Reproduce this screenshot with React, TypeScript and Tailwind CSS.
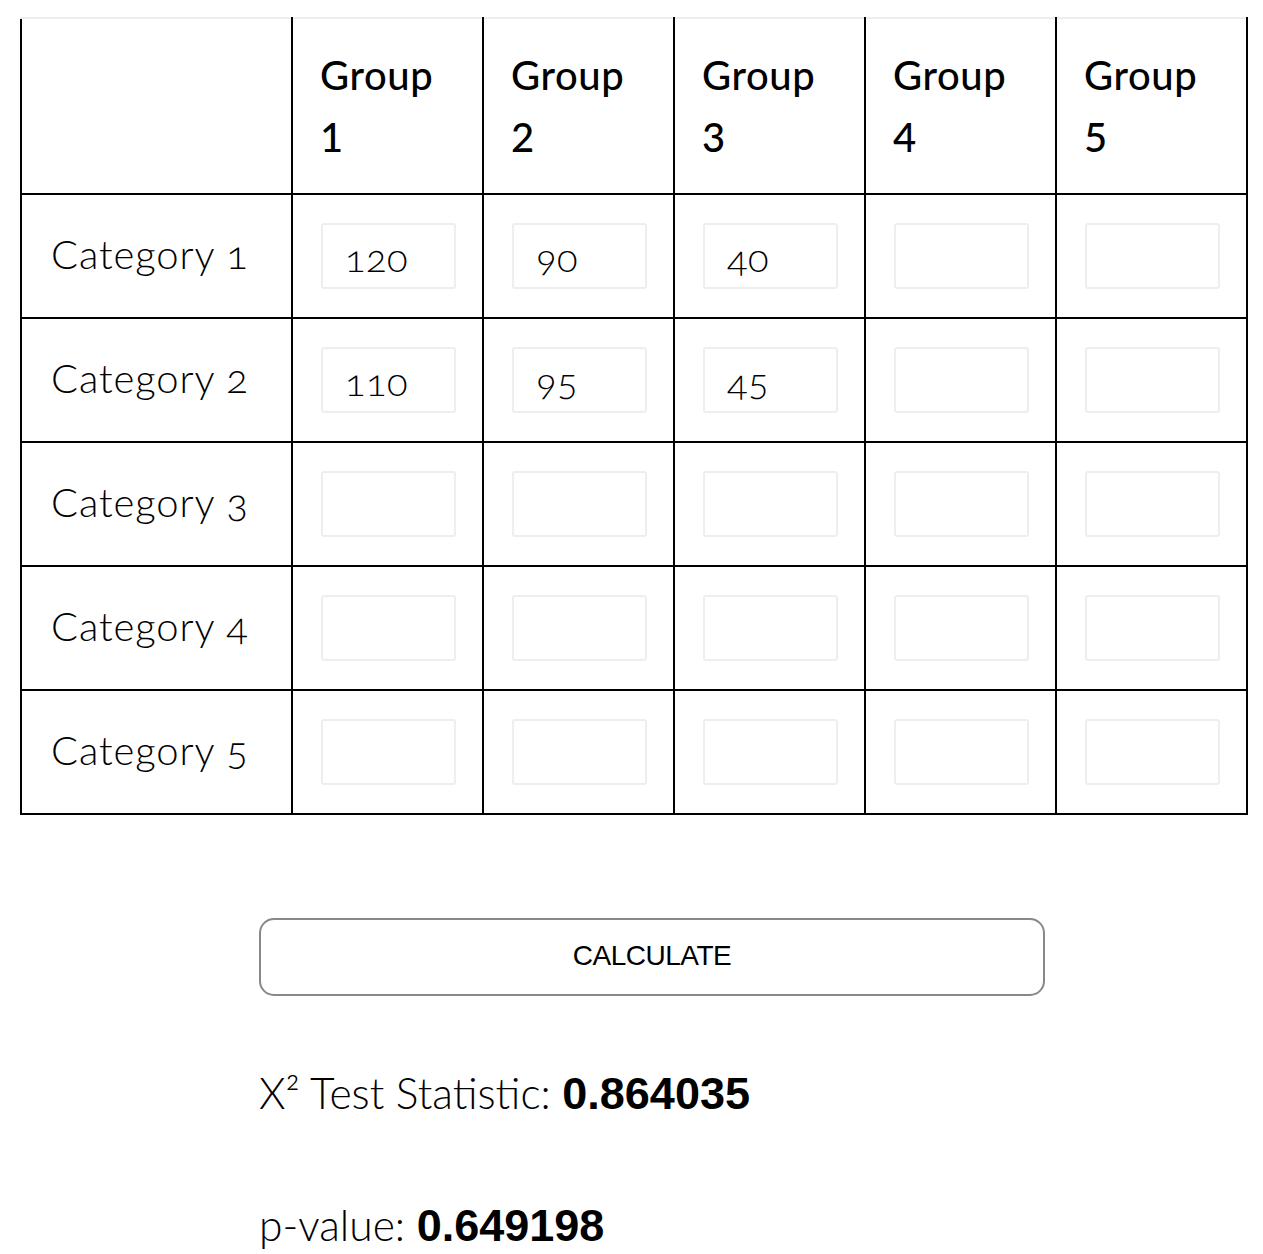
import { useState } from "react";

const groups = ["Group 1", "Group 2", "Group 3", "Group 4", "Group 5"];
const categories = ["Category 1", "Category 2", "Category 3", "Category 4", "Category 5"];

const initial: string[][] = [
  ["120", "90", "40", "", ""],
  ["110", "95", "45", "", ""],
  ["", "", "", "", ""],
  ["", "", "", "", ""],
  ["", "", "", "", ""],
];

export default function App() {
  const [cells, setCells] = useState(initial);

  function update(r: number, c: number, v: string) {
    setCells((prev) => prev.map((row, i) => (i === r ? row.map((x, j) => (j === c ? v : x)) : row)));
  }

  return (
    <div className="min-h-[1254px] bg-white text-black font-['Lato','Open_Sans',sans-serif] pt-[17px]">
      <table className="ml-[20px] w-[1228px] table-fixed border-collapse border-t-2 border-t-[#eeeeee]">
        <colgroup>
          <col className="w-[271px]" />
          <col />
          <col />
          <col />
          <col />
          <col />
        </colgroup>
        <thead>
          <tr className="h-[176px]">
            <th className="border-2 border-black border-t-[#eeeeee]" />
            {groups.map((g) => (
              <th
                key={g}
                className="border-2 border-black border-t-[#eeeeee] px-[27px] text-left align-middle text-[40px] font-medium tracking-[0.6px] leading-[62px]"
              >
                {g}
              </th>
            ))}
          </tr>
        </thead>
        <tbody>
          {categories.map((cat, r) => (
            <tr key={cat} className="h-[124px]">
              <td className="border-2 border-black pl-[29px] pb-[4px] text-[40px] font-light tracking-[0.9px] oldstyle-nums">
                {cat}
              </td>
              {cells[r].map((v, c) => (
                <td key={c} className="border-2 border-black pl-[28px]">
                  <input
                    value={v}
                    onChange={(e) => update(r, c, e.target.value)}
                    className="block w-[135px] h-[66px] rounded-[3px] border-2 border-[#eeeeee] px-[22px] pt-[2px] text-[38px] font-light tracking-[0.5px] oldstyle-nums outline-none"
                  />
                </td>
              ))}
            </tr>
          ))}
        </tbody>
      </table>

      <div className="ml-[259px] w-[786px] mt-[103px]">
        <button className="block w-full h-[78px] rounded-[15px] border-2 border-[#888888] bg-white pb-[2px] font-['Liberation_Sans',Arial,sans-serif] text-[28px] tracking-[-0.5px] text-black">
          CALCULATE
        </button>
        <p className="mt-[67px] text-[42.6px] font-light leading-[60px]">
          X² Test Statistic:{" "}
          <span className="font-bold text-[45px] font-['Liberation_Sans',Arial,sans-serif]">0.864035</span>
        </p>
        <p className="mt-[71px] text-[42.6px] font-light leading-[60px]">
          p-value:{" "}
          <span className="font-bold text-[45px] font-['Liberation_Sans',Arial,sans-serif]">0.649198</span>
        </p>
      </div>
    </div>
  );
}
